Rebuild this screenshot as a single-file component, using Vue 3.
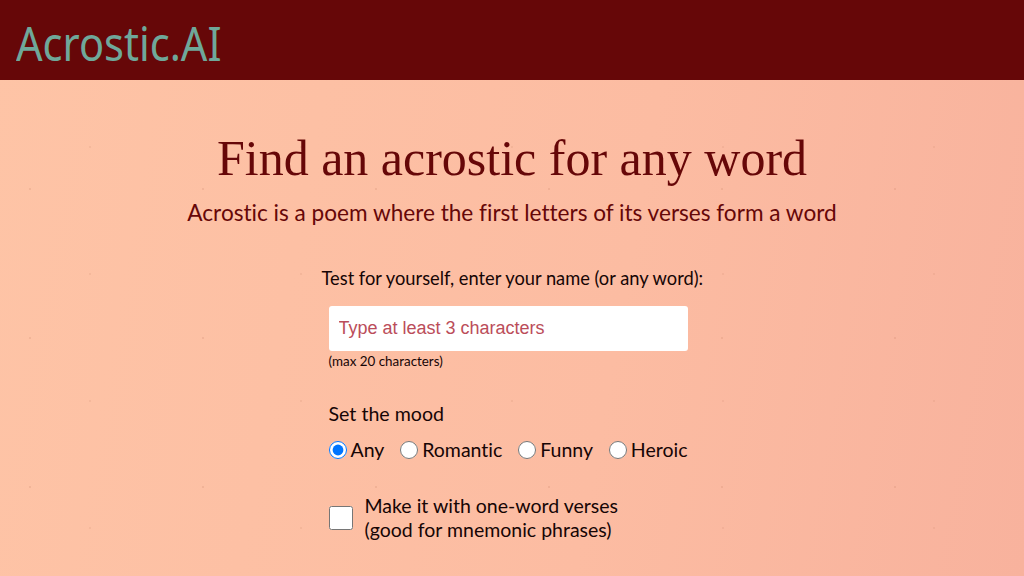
<template>
  <div class="page">
    <header class="top-bar">
      <span class="logo">Acrostic.AI</span>
    </header>

    <main class="content">
      <h1 class="title">Find an acrostic for any word</h1>
      <p class="subtitle">Acrostic is a poem where the first letters of its verses form a word</p>

      <form class="form" @submit.prevent>
        <label class="name-label" for="word">Test for yourself, enter your name (or any word):</label>
        <div class="fields">
          <input id="word" v-model="word" class="word-input" type="text" maxlength="20" placeholder="Type at least 3 characters" />
          <div class="hint">(max 20 characters)</div>

          <div class="mood-label">Set the mood</div>
          <div class="moods">
            <label v-for="m in moods" :key="m" class="mood">
              <input v-model="mood" type="radio" name="mood" :value="m" />
              <span>{{ m }}</span>
            </label>
          </div>

          <label class="one-word">
            <input v-model="oneWord" type="checkbox" />
            <span>Make it with one-word verses<br />(good for mnemonic phrases)</span>
          </label>
        </div>
      </form>
    </main>
  </div>
</template>

<script setup>
import { ref } from 'vue'

const moods = ['Any', 'Romantic', 'Funny', 'Heroic']

const word = ref('')
const mood = ref('Any')
const oneWord = ref(false)
</script>

<style>
html,
body {
  margin: 0;
  overflow: hidden;
}
</style>

<style scoped>
.page {
  height: 576px;
  overflow: hidden;
  /* paper specks over the peach gradient */
  background:
    radial-gradient(circle at 30px 40px, rgba(190, 120, 90, 0.35) 0, rgba(190, 120, 90, 0) 1.5px) 0 0 / 173px 149px,
    radial-gradient(circle at 90px 20px, rgba(190, 120, 90, 0.25) 0, rgba(190, 120, 90, 0) 1.5px) 0 0 / 211px 127px,
    linear-gradient(100deg, #fec4a6 0%, #fcbca2 60%, #f8b29d 100%);
  color: #160505;
  font-family: Lato, "Open Sans", sans-serif;
  font-variant-ligatures: none;
}

.top-bar {
  height: 80px;
  background: #660708;
  display: flex;
  align-items: center;
  padding: 7px 0 0 16px;
  box-sizing: border-box;
}

.logo {
  color: #6fa89a;
  font-family: "Noto Sans", sans-serif;
  font-size: 41.6px;
  line-height: 1;
  transform: scaleY(1.12);
}

.content {
  display: flex;
  flex-direction: column;
  align-items: center;
}

.title {
  margin: 50px 0 0;
  color: #660708;
  font-family: "Liberation Serif", serif;
  font-size: 50px;
  font-weight: 400;
  line-height: 56px;
}

.subtitle {
  margin: 12px 0 0;
  color: #660708;
  font-size: 22.6px;
  line-height: 30px;
}

.form {
  margin-top: 38px;
  width: 382px;
  padding-left: 1px;
}

.name-label {
  display: block;
  font-size: 18.3px;
  line-height: 24px;
}

.fields {
  display: flex;
  flex-direction: column;
  align-items: flex-start;
  padding-left: 7px;
}

.word-input {
  box-sizing: border-box;
  width: 359px;
  height: 45px;
  margin-top: 16px;
  padding: 0 10px;
  border: none;
  border-radius: 3px;
  background: #fff;
  font-family: "Liberation Sans", sans-serif;
  font-size: 18px;
}

.word-input::placeholder {
  color: #bb4d5a;
  opacity: 1;
}

.hint {
  margin-top: 1px;
  font-size: 13.4px;
  line-height: 18px;
}

.mood-label {
  margin-top: 31px;
  font-size: 19.6px;
  line-height: 26px;
}

.moods {
  display: flex;
  justify-content: space-between;
  width: 359px;
  margin-top: 10px;
}

.mood {
  display: flex;
  align-items: center;
  gap: 4px;
  font-size: 19.5px;
  line-height: 26px;
}

.mood input {
  width: 18px;
  height: 18px;
  margin: 0;
}

.one-word {
  display: flex;
  align-items: center;
  gap: 12px;
  margin-top: 31px;
  font-size: 19.5px;
  line-height: 24px;
}

.one-word input {
  width: 24px;
  height: 24px;
  margin: 0;
}
</style>
